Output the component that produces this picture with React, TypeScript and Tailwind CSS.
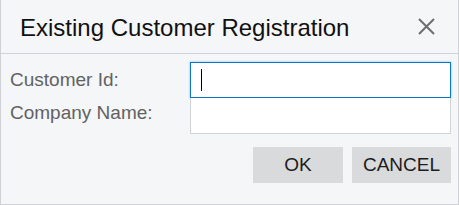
import React from 'react';

const App = () => {
  return (
    <div
      className="w-[459px] h-[205px] bg-[#f5f6f8] border-l border-r border-b border-[#cfd1d4] flex flex-col"
      style={{ fontFamily: '"Liberation Sans", Arial, sans-serif' }}
    >
      <div className="h-[54px] shrink-0 flex items-center justify-between pl-[19px] pr-[22px] border-b border-[#cfd1d4]">
        <span className="text-[24px] text-[#111] leading-none mt-[2px]">Existing Customer Registration</span>
        <svg width="19" height="19" viewBox="0 0 19 19" className="text-[#6e6e6e]">
          <path d="M2 2 L17 17 M17 2 L2 17" stroke="currentColor" strokeWidth="2" fill="none" />
        </svg>
      </div>

      <div className="pt-[8px] pl-[9px] pr-[7px] flex flex-col">
        <div className="flex items-center h-[36px]">
          <span className="w-[180px] text-[19px] text-[#626262]">Customer Id:</span>
          <div className="flex-1 h-[36px] bg-white border border-[#0b78c6] shadow-[0_0_2px_rgba(11,120,198,0.5)] flex items-center pl-[10px]">
            <span className="w-px h-[22px] bg-black" />
          </div>
        </div>
        <div className="flex items-center h-[36px]">
          <span className="w-[180px] text-[19px] text-[#626262] -mt-[6px]">Company Name:</span>
          <div className="flex-1 h-[36px] bg-white border border-[#d2d3d6] border-t-0" />
        </div>
        <div className="flex justify-end gap-[9px] mt-[13px]">
          <button className="w-[90px] h-[36px] bg-[#d9dadc] text-[19px] text-[#1c1c1c]">OK</button>
          <button className="w-[99px] h-[36px] bg-[#d9dadc] text-[19px] text-[#1c1c1c]">CANCEL</button>
        </div>
      </div>
    </div>
  );
};

export default App;
